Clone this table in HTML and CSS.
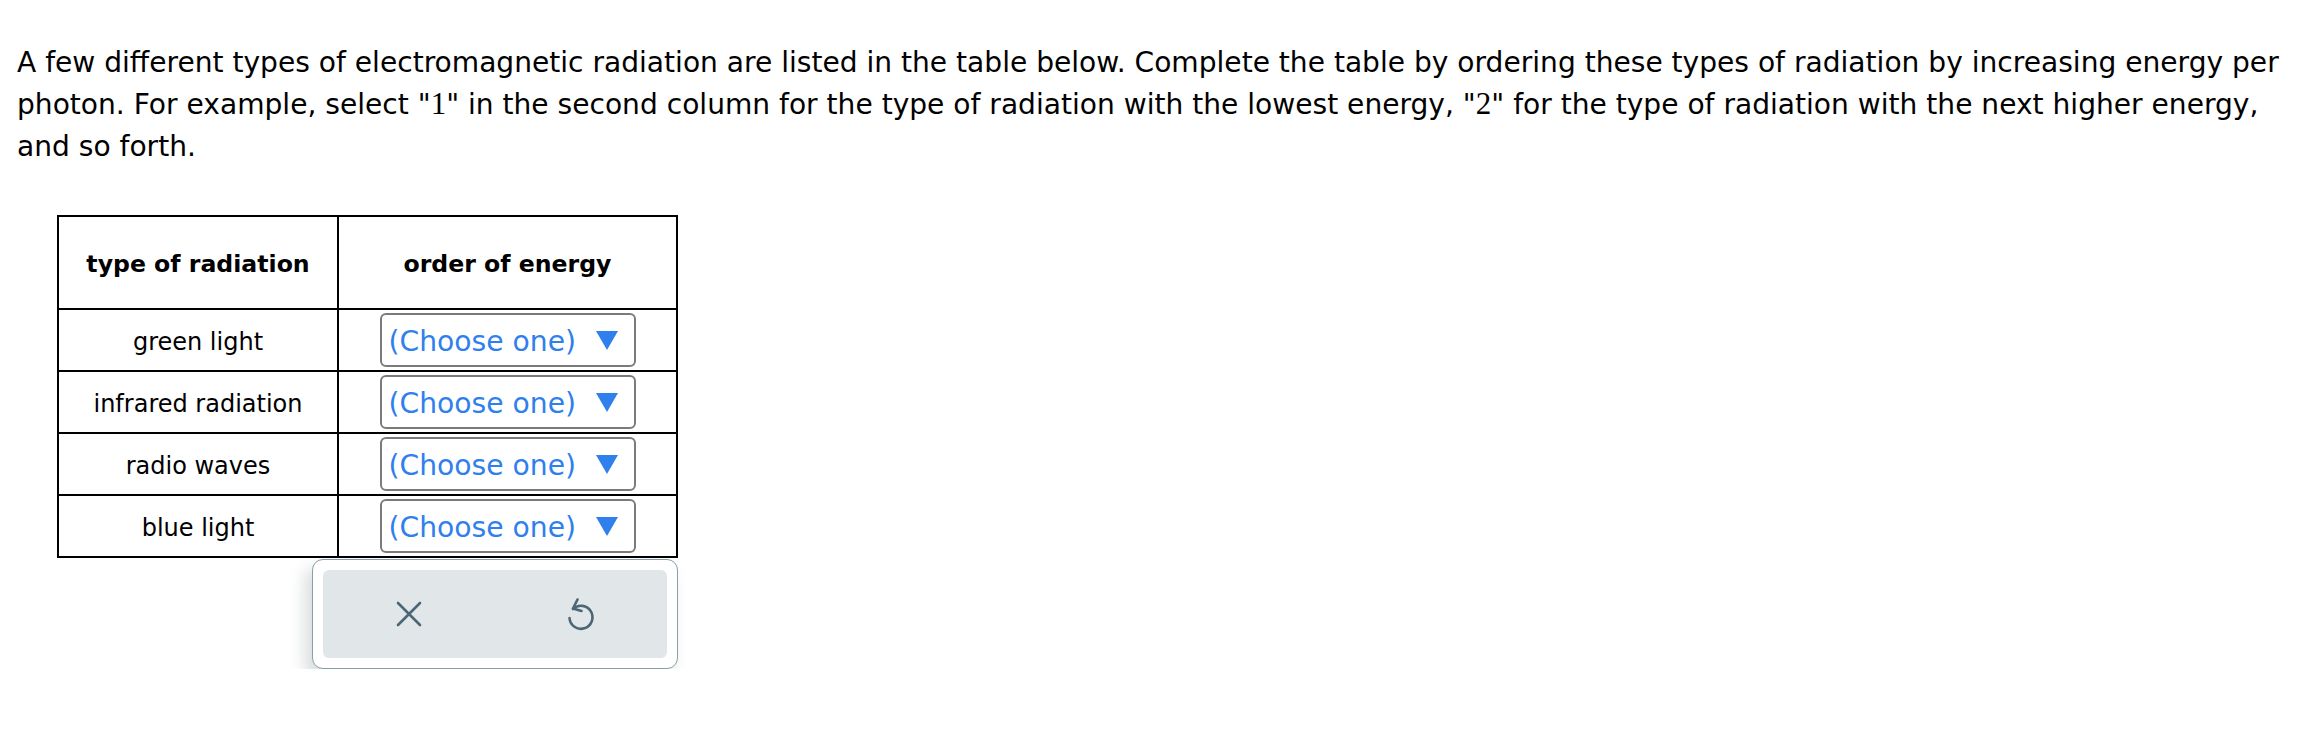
FILE: index.html
```html
<!DOCTYPE html>
<html lang="en">
<head>
<meta charset="utf-8">
<title>Order of energy</title>
<link rel="stylesheet" href="styles.css">
</head>
<body>
<main class="page">
  <p class="prompt">A few different types of electromagnetic radiation are listed in the table below. Complete the table by ordering these types of radiation by increasing energy per photon. For example, select "<span class="num">1</span>" in the second column for the type of radiation with the lowest energy, "<span class="num">2</span>" for the type of radiation with the next higher energy, and so forth.</p>
  <div class="answer">
    <table class="grid">
      <tr>
        <th class="c1">type of radiation</th>
        <th class="c2">order of energy</th>
      </tr>
      <tr>
        <td class="c1">green light</td>
        <td class="c2"><div class="dropdown"><span>(Choose one)</span><svg class="caret" width="22" height="19" viewBox="0 0 22 19"><polygon points="0,0 22,0 11,19"/></svg></div></td>
      </tr>
      <tr>
        <td class="c1">infrared radiation</td>
        <td class="c2"><div class="dropdown"><span>(Choose one)</span><svg class="caret" width="22" height="19" viewBox="0 0 22 19"><polygon points="0,0 22,0 11,19"/></svg></div></td>
      </tr>
      <tr>
        <td class="c1">radio waves</td>
        <td class="c2"><div class="dropdown"><span>(Choose one)</span><svg class="caret" width="22" height="19" viewBox="0 0 22 19"><polygon points="0,0 22,0 11,19"/></svg></div></td>
      </tr>
      <tr>
        <td class="c1">blue light</td>
        <td class="c2"><div class="dropdown"><span>(Choose one)</span><svg class="caret" width="22" height="19" viewBox="0 0 22 19"><polygon points="0,0 22,0 11,19"/></svg></div></td>
      </tr>
    </table>
    <div class="tools">
      <div class="tools-inner">
        <button class="tool" aria-label="Clear">
          <svg width="26" height="26" viewBox="0 0 26 26"><path d="M2 2 L24 24 M24 2 L2 24"/></svg>
        </button>
        <button class="tool" aria-label="Undo">
          <svg width="30" height="36" viewBox="0 0 30 36"><path d="M7 13 A11.5 11.5 0 1 1 3.5 22"/><path d="M11.5 3.5 L7 12.5 L15.5 15"/></svg>
        </button>
      </div>
    </div>
  </div>
</main>
</body>
</html>
```
FILE: styles.css
```css
html, body {
  margin: 0;
  background: #fff;
}
body {
  font-family: "DejaVu Sans", Verdana, sans-serif;
  color: #000;
}
.page {
  padding: 42px 8px 0 17px;
}
.prompt {
  margin: 0;
  font-size: 28.1px;
  line-height: 42px;
}
.num {
  font-family: "Liberation Serif", "Times New Roman", serif;
  font-size: 31px;
  line-height: 1;
}
.answer {
  display: inline-flex;
  flex-direction: column;
  align-items: flex-end;
  margin: 47px 0 0 40px;
}
.grid {
  border-collapse: separate;
  border-spacing: 2px;
  background: #000;
}
.grid th, .grid td {
  padding: 0;
  background: #fff;
  text-align: center;
  vertical-align: middle;
  font-size: 24px;
}
.grid th {
  height: 89px;
  padding-top: 2px;
  font-size: 23.6px;
  font-weight: bold;
}
.grid td {
  height: 60px;
}
.grid td.c1 {
  height: 56px;
  padding-top: 4px;
}
.c1 { width: 278px; }
.c2 { width: 337px; }
.dropdown {
  display: inline-flex;
  align-items: center;
  justify-content: space-between;
  box-sizing: border-box;
  width: 256px;
  height: 54px;
  padding: 2px 16px 0 7px;
  border: 2px solid #7b7b7b;
  border-radius: 6px;
  color: #2f80ed;
  font-size: 28.2px;
  vertical-align: middle;
}
.caret {
  margin-top: -2px;
}
.caret polygon {
  fill: #2f80ed;
}
.tools {
  margin-top: 1px;
  width: 366px;
  height: 110px;
  box-sizing: border-box;
  padding: 10px;
  border: 1.5px solid #8a9ea8;
  border-radius: 11px;
  background: #fff;
  box-shadow: -7px 9px 16px rgba(40, 60, 70, 0.18);
}
.tools-inner {
  display: flex;
  height: 100%;
  background: #e1e6e9;
  border-radius: 6px;
}
.tool {
  flex: 1;
  display: flex;
  align-items: center;
  justify-content: center;
  border: 0;
  padding: 0;
  background: transparent;
}
.tool svg path {
  fill: none;
  stroke: #4b6775;
  stroke-width: 2.6;
  stroke-linecap: round;
  stroke-linejoin: round;
}
```
